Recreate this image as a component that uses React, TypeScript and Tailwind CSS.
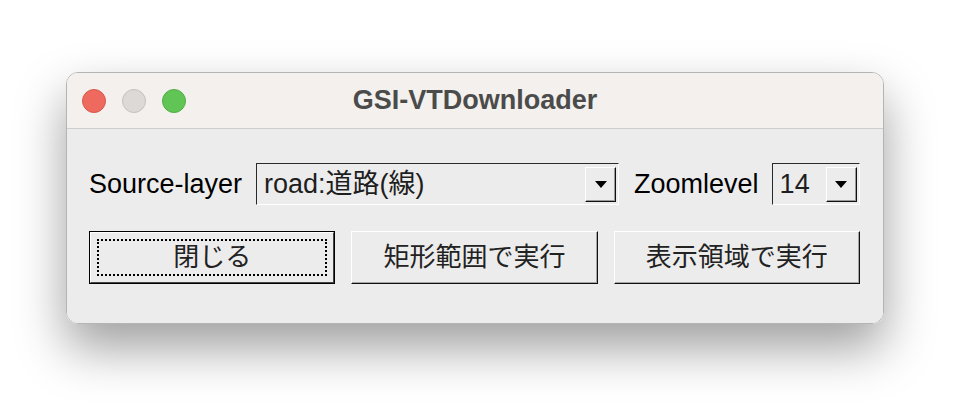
import React from "react";

const font = "font-['Liberation_Sans','Noto_Sans_CJK_JP',sans-serif]";

function Arrow() {
  return (
    <div className="ml-auto mr-[2px] mt-[1px] flex h-[35px] w-[31px] items-center justify-center border border-t-white border-l-white border-r-[#111] border-b-[#111] bg-[#ececec] shadow-[inset_-1px_-1px_0_#9a9a9a]">
      <svg width="14" height="9" viewBox="0 0 14 9">
        <polygon points="1,1 13,1 7,8" fill="#000" />
      </svg>
    </div>
  );
}

function Combo({ value, width }: { value: string; width: string }) {
  return (
    <div className={`flex h-[42px] items-center border border-t-[#2a2a2a] border-l-[#2a2a2a] border-r-white border-b-white bg-[#ececec] ${width}`}>
      <span className="pl-[7px] text-[27px] leading-none text-[#1e1e1e]">{value}</span>
      <Arrow />
    </div>
  );
}

function Button({ label, focused }: { label: string; focused?: boolean }) {
  if (focused) {
    return (
      <div className="flex h-[53px] border border-black bg-[#ececec]">
        <div className="flex flex-1 border border-t-white border-l-white border-r-[#444] border-b-[#444] p-[6px]">
          <div className="flex flex-1 items-center justify-center border-2 border-dotted border-black text-[26px] text-[#222]">
            {label}
          </div>
        </div>
      </div>
    );
  }
  return (
    <div className="flex h-[53px] items-center justify-center border border-t-white border-l-white border-r-[#111] border-b-[#111] bg-[#ececec] text-[26px] text-[#222] shadow-[inset_-1px_-1px_0_#a5a5a5]">
      {label}
    </div>
  );
}

export default function App() {
  return (
    <div className={`h-[410px] w-[980px] overflow-hidden bg-white pl-[66px] pt-[72px] ${font}`}>
      <div className="flex h-[252px] w-[818px] flex-col overflow-hidden rounded-[12px] border border-[#b4b4b4] shadow-[0_24px_50px_rgba(0,0,0,0.38)]">
        <div className="grid h-[56px] grid-cols-[1fr_auto_1fr] items-center border-b border-[#cdcdcd] bg-[#f3f0ed]">
          <div className="flex gap-[16px] pl-[15px]">
            <span className="h-[24px] w-[24px] rounded-full border border-[#d9574d] bg-[#ee6a5f]" />
            <span className="h-[24px] w-[24px] rounded-full border border-[#c4c2c0] bg-[#dcd9d7]" />
            <span className="h-[24px] w-[24px] rounded-full border border-[#4fae44] bg-[#61c555]" />
          </div>
          <div className="text-[27px] font-bold text-[#4b4b4b]">GSI-VTDownloader</div>
          <div />
        </div>
        <div className="flex flex-1 flex-col gap-[26px] bg-[#ececec] px-[22px] pt-[34px]">
          <div className="flex items-center">
            <span className="mr-[14px] text-[27px] text-black">Source-layer</span>
            <Combo value="road:道路(線)" width="w-[363px]" />
            <span className="ml-[15px] mr-[13px] text-[27px] text-black">Zoomlevel</span>
            <Combo value="14" width="w-[88px]" />
          </div>
          <div className="grid grid-cols-3 gap-[16px] pr-[1px]">
            <Button label="閉じる" focused />
            <Button label="矩形範囲で実行" />
            <Button label="表示領域で実行" />
          </div>
        </div>
      </div>
    </div>
  );
}
